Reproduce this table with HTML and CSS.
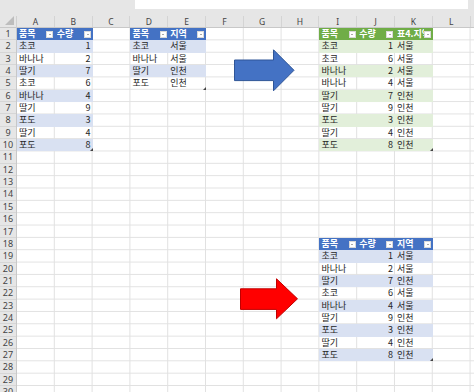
FILE: index.html
```html
<!DOCTYPE html>
<html lang="ko">
<head>
<meta charset="utf-8">
<title>Excel</title>
<link rel="stylesheet" href="styles.css">
</head>
<body>
<div class="app">
  <div class="topbar"><div class="formula"></div></div>
  <div class="sheet">
    <div class="corner"><span class="tri"></span></div>
    <div class="colheads">
      <div class="ch">A</div><div class="ch">B</div><div class="ch">C</div><div class="ch">D</div>
      <div class="ch">E</div><div class="ch">F</div><div class="ch">G</div><div class="ch">H</div>
      <div class="ch">I</div><div class="ch">J</div><div class="ch">K</div><div class="ch">L</div>
      <div class="ch last"></div>
    </div>
    <div class="rowheads">
      <div class="rh">1</div><div class="rh">2</div><div class="rh">3</div><div class="rh">4</div><div class="rh">5</div>
      <div class="rh">6</div><div class="rh">7</div><div class="rh">8</div><div class="rh">9</div><div class="rh">10</div>
      <div class="rh">11</div><div class="rh">12</div><div class="rh">13</div><div class="rh">14</div><div class="rh">15</div>
      <div class="rh">16</div><div class="rh">17</div><div class="rh">18</div><div class="rh">19</div><div class="rh">20</div>
      <div class="rh">21</div><div class="rh">22</div><div class="rh">23</div><div class="rh">24</div><div class="rh">25</div>
      <div class="rh">26</div><div class="rh">27</div><div class="rh">28</div><div class="rh">29</div><div class="rh">30</div>
    </div>
    <div class="cells">
      <!-- Table 1: A1:B10 -->
      <div class="tbl blue t1">
        <div class="tr head cols2">
          <div class="td"><span class="lbl">품목</span><span class="dd"></span></div>
          <div class="td"><span class="lbl">수량</span><span class="dd"></span></div>
        </div>
        <div class="tr band cols2"><div class="td">초코</div><div class="td num">1</div></div>
        <div class="tr cols2"><div class="td">바나나</div><div class="td num">2</div></div>
        <div class="tr band cols2"><div class="td">딸기</div><div class="td num">7</div></div>
        <div class="tr cols2"><div class="td">초코</div><div class="td num">6</div></div>
        <div class="tr band cols2"><div class="td">바나나</div><div class="td num">4</div></div>
        <div class="tr cols2"><div class="td">딸기</div><div class="td num">9</div></div>
        <div class="tr band cols2"><div class="td">포도</div><div class="td num">3</div></div>
        <div class="tr cols2"><div class="td">딸기</div><div class="td num">4</div></div>
        <div class="tr band cols2 end"><div class="td">포도</div><div class="td num">8</div></div>
      </div>

      <!-- Table 2: D1:E5 -->
      <div class="tbl blue t2">
        <div class="tr head cols2">
          <div class="td"><span class="lbl">품목</span><span class="dd"></span></div>
          <div class="td"><span class="lbl">지역</span><span class="dd"></span></div>
        </div>
        <div class="tr band cols2"><div class="td">초코</div><div class="td">서울</div></div>
        <div class="tr cols2"><div class="td">바나나</div><div class="td">서울</div></div>
        <div class="tr band cols2"><div class="td">딸기</div><div class="td">인천</div></div>
        <div class="tr cols2 end"><div class="td">포도</div><div class="td">인천</div></div>
      </div>

      <!-- Table 3: I1:K10 (green) -->
      <div class="tbl green t3">
        <div class="tr head cols3">
          <div class="td"><span class="lbl">품목</span><span class="dd"></span></div>
          <div class="td"><span class="lbl">수량</span><span class="dd"></span></div>
          <div class="td"><span class="lbl">표4.지역</span><span class="dd"></span></div>
        </div>
        <div class="tr band cols3"><div class="td">초코</div><div class="td num">1</div><div class="td">서울</div></div>
        <div class="tr cols3"><div class="td">초코</div><div class="td num">6</div><div class="td">서울</div></div>
        <div class="tr band cols3"><div class="td">바나나</div><div class="td num">2</div><div class="td">서울</div></div>
        <div class="tr cols3"><div class="td">바나나</div><div class="td num">4</div><div class="td">서울</div></div>
        <div class="tr band cols3"><div class="td">딸기</div><div class="td num">7</div><div class="td">인천</div></div>
        <div class="tr cols3"><div class="td">딸기</div><div class="td num">9</div><div class="td">인천</div></div>
        <div class="tr band cols3"><div class="td">포도</div><div class="td num">3</div><div class="td">인천</div></div>
        <div class="tr cols3"><div class="td">딸기</div><div class="td num">4</div><div class="td">인천</div></div>
        <div class="tr band cols3 end"><div class="td">포도</div><div class="td num">8</div><div class="td">인천</div></div>
      </div>

      <!-- Table 4: I18:K27 -->
      <div class="tbl blue t4">
        <div class="tr head cols3">
          <div class="td"><span class="lbl">품목</span><span class="dd"></span></div>
          <div class="td"><span class="lbl">수량</span><span class="dd"></span></div>
          <div class="td"><span class="lbl">지역</span><span class="dd"></span></div>
        </div>
        <div class="tr band cols3"><div class="td">초코</div><div class="td num">1</div><div class="td">서울</div></div>
        <div class="tr cols3"><div class="td">바나나</div><div class="td num">2</div><div class="td">서울</div></div>
        <div class="tr band cols3"><div class="td">딸기</div><div class="td num">7</div><div class="td">인천</div></div>
        <div class="tr cols3"><div class="td">초코</div><div class="td num">6</div><div class="td">서울</div></div>
        <div class="tr band cols3"><div class="td">바나나</div><div class="td num">4</div><div class="td">서울</div></div>
        <div class="tr cols3"><div class="td">딸기</div><div class="td num">9</div><div class="td">인천</div></div>
        <div class="tr band cols3"><div class="td">포도</div><div class="td num">3</div><div class="td">인천</div></div>
        <div class="tr cols3"><div class="td">딸기</div><div class="td num">4</div><div class="td">인천</div></div>
        <div class="tr band cols3 end"><div class="td">포도</div><div class="td num">8</div><div class="td">인천</div></div>
      </div>

      <svg class="arrow arrow-blue" width="61" height="43" viewBox="0 0 61 43">
        <path d="M0.5 11 H39.5 V0.8 L60 21.3 L39.5 41.8 V31.6 H0.5 Z" fill="#4472c4" stroke="#2f5597" stroke-width="1"/>
      </svg>
      <svg class="arrow arrow-red" width="59" height="42" viewBox="0 0 59 42">
        <path d="M0.5 10.8 H36.5 V0.8 L57.5 20.8 L36.5 40.8 V31.4 H0.5 Z" fill="#ff0000" stroke="#c00000" stroke-width="1"/>
      </svg>
    </div>
  </div>
</div>
</body>
</html>
```

FILE: styles.css
```css
html, body {
  margin: 0;
  padding: 0;
  background: #ffffff;
}

.app {
  width: 474px;
  height: 392px;
  overflow: hidden;
  display: flex;
  flex-direction: column;
  background: #ffffff;
}

.topbar {
  height: 16px;
  flex: none;
  background: #e6e6e6;
  padding-left: 135px;
  padding-right: 6px;
}

.formula {
  height: 9px;
  background: #ffffff;
}

.sheet {
  flex: 1;
  display: grid;
  grid-template-columns: 17px 1fr;
  grid-template-rows: 12px 1fr;
  font-family: "Noto Sans CJK KR", "Noto Sans", sans-serif;
}

.corner {
  background: #e6e6e6;
  border-right: 1px solid #d0d0d0;
  border-bottom: 1px solid #c8c8c8;
  box-sizing: border-box;
  position: relative;
}

.tri {
  position: absolute;
  right: 2px;
  bottom: 2px;
  width: 0;
  height: 0;
  border-left: 9px solid transparent;
  border-bottom: 9px solid #bdbdbd;
}

.colheads {
  display: grid;
  grid-template-columns: repeat(12, 37.8px) 1fr;
  background: #e6e6e6;
  border-bottom: 1px solid #c8c8c8;
  box-sizing: border-box;
}

.ch {
  font-family: "Noto Sans", "Open Sans", sans-serif;
  font-size: 8.5px;
  line-height: 11px;
  color: #444;
  text-align: center;
  border-right: 1px solid #d4d4d4;
}

.ch.last {
  border-right: none;
}

.rowheads {
  display: grid;
  grid-template-rows: repeat(30, 12.35px);
  background: #e6e6e6;
  border-right: 1px solid #c8c8c8;
  box-sizing: border-box;
}

.rh {
  font-family: "Noto Sans", "Open Sans", sans-serif;
  font-size: 9px;
  line-height: 12px;
  color: #444;
  text-align: center;
  border-bottom: 1px solid #d6d6d6;
  box-sizing: border-box;
}

.cells {
  position: relative;
  display: grid;
  grid-template-columns: repeat(12, 37.8px) 1fr;
  grid-template-rows: repeat(30, 12.35px);
  background-color: #ffffff;
  background-image:
    linear-gradient(to right, transparent calc(100% - 1px), #e1e1e1 0),
    linear-gradient(to bottom, transparent calc(100% - 1px), #e1e1e1 0);
  background-size: 37.8px 100%, 100% 12.35px;
}

/* tables */
.tbl {
  display: flex;
  flex-direction: column;
  font-size: 9px;
  color: #262626;
  position: relative;
}

.t1 { grid-column: 1 / 3; grid-row: 1 / 11; }
.t2 { grid-column: 4 / 6; grid-row: 1 / 6; }
.t3 { grid-column: 9 / 12; grid-row: 1 / 11; }
.t4 { grid-column: 9 / 12; grid-row: 18 / 28; }

.tr {
  flex: 1;
  display: grid;
  min-height: 0;
}

.cols2 { grid-template-columns: repeat(2, 1fr); }
.cols3 { grid-template-columns: repeat(3, 1fr); }

.td {
  padding: 0 2px;
  line-height: 12.35px;
  white-space: nowrap;
  overflow: hidden;
  min-width: 0;
}

.td.num {
  text-align: right;
}

.head .td {
  display: flex;
  align-items: center;
  justify-content: space-between;
  color: #ffffff;
  font-weight: 700;
  padding-right: 1.5px;
  gap: 0;
}

.lbl {
  overflow: hidden;
  min-width: 0;
  flex: 1;
}

.dd {
  flex: none;
  width: 7px;
  height: 7px;
  background: #ffffff;
  box-sizing: border-box;
  border: 1px solid #d9d9d9;
  display: flex;
  align-items: center;
  justify-content: center;
}

.dd::after {
  content: "";
  width: 0;
  height: 0;
  border-left: 1.5px solid transparent;
  border-right: 1.5px solid transparent;
  border-top: 1.5px solid #555;
}

.blue .head { background: #4472c4; }
.blue .band { background: #d9e1f2; }
.green .head { background: #70ad47; }
.green .band { background: #e2efda; }

.end {
  position: relative;
}

.end::after {
  content: "";
  position: absolute;
  right: 0;
  bottom: 0;
  width: 0;
  height: 0;
  border-left: 3px solid transparent;
  border-bottom: 3px solid #444;
}

/* shapes */
.arrow {
  position: absolute;
  display: block;
}

.arrow-blue {
  left: 216.5px;
  top: 20.5px;
}

.arrow-red {
  left: 223px;
  top: 250px;
}
```
